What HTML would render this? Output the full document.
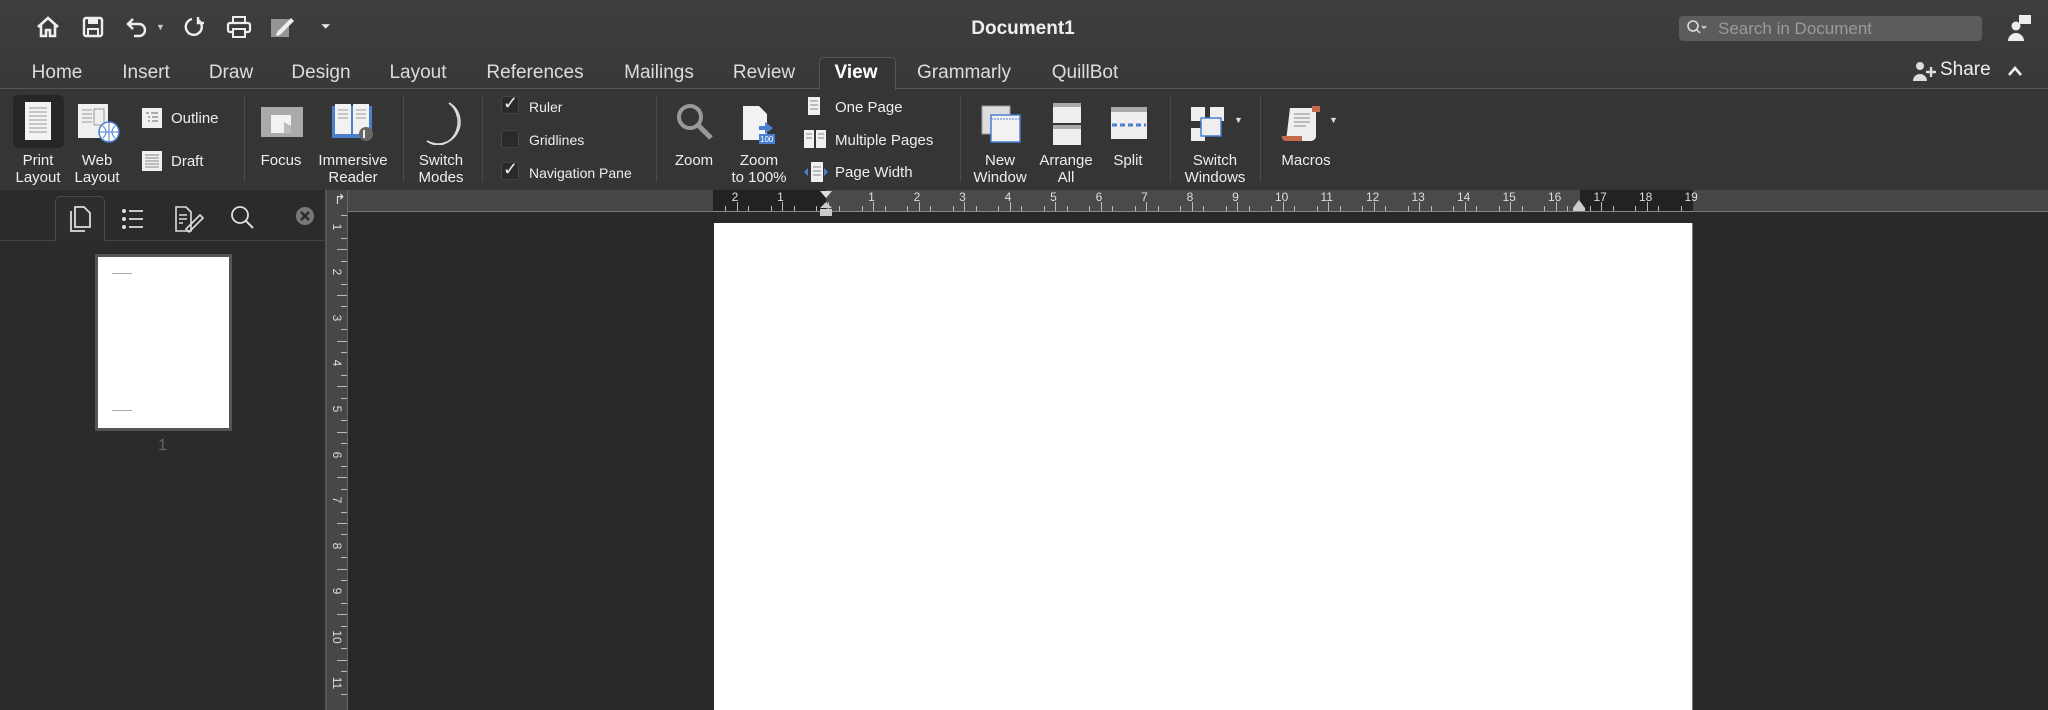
<!DOCTYPE html>
<html><head><meta charset="utf-8"><style>
*{margin:0;padding:0;box-sizing:border-box}
body{width:2048px;height:710px;overflow:hidden;background:#292929;font-family:"Liberation Sans",sans-serif;color:#e6e6e6;position:relative}
.a{position:absolute}
#top{left:0;top:0;width:2048px;height:89px;background:linear-gradient(#3e3e3e,#383838);border-bottom:1px solid #555}
#rib{left:0;top:89px;width:2048px;height:101px;background:#353535}
.tab{position:absolute;top:62px;font-size:19px;color:#ddd;transform:translateX(-50%);white-space:nowrap}
.lbl{position:absolute;font-size:15px;line-height:17px;text-align:center;transform:translateX(-50%);white-space:nowrap;color:#eee}
.sep{position:absolute;top:96px;width:1px;height:86px;background:#4a4a4a}
.sm{position:absolute;font-size:15px;color:#eee;white-space:nowrap}
.cb{position:absolute;left:501px;width:18px;height:18px;border-radius:3px;background:#2a2a2a;border:1px solid #444}
.chk{position:absolute;left:503px;font-size:18px;color:#eee}
svg{position:absolute}
</style></head><body>
<div id="top" class="a"></div>
<div id="rib" class="a"></div>

<svg style="left:36px;top:15px" width="24" height="24" viewBox="0 0 24 24"><path d="M2 12 L12 3 L22 12 M5 10 V21 H10 V15 H14 V21 H19 V10" fill="none" stroke="#eee" stroke-width="2.6"/></svg>
<svg style="left:82px;top:16px" width="22" height="22" viewBox="0 0 22 22"><rect x="2" y="2" width="18" height="18" rx="2" fill="none" stroke="#eee" stroke-width="2.4"/><rect x="6" y="2" width="10" height="6" fill="#eee"/><rect x="6" y="13" width="10" height="7" fill="none" stroke="#eee" stroke-width="2"/></svg>
<svg style="left:125px;top:16px" width="24" height="22" viewBox="0 0 24 22"><path d="M8 3 L3 8 L8 13 M3 8 H14 A6 6 0 0 1 14 20 H9" fill="none" stroke="#eee" stroke-width="2.4"/></svg>
<div class="a" style="left:156px;top:22px;font-size:9px;color:#ccc">▼</div>
<svg style="left:182px;top:15px" width="24" height="24" viewBox="0 0 24 24"><path d="M10 4 A8 8 0 1 0 16 5 M16 2 V8 H22" fill="none" stroke="#eee" stroke-width="2.4"/></svg>
<svg style="left:226px;top:15px" width="26" height="24" viewBox="0 0 26 24"><rect x="7" y="2" width="12" height="6" fill="none" stroke="#eee" stroke-width="2"/><rect x="2" y="8" width="22" height="9" rx="2" fill="none" stroke="#eee" stroke-width="2.2"/><rect x="7" y="14" width="12" height="8" fill="#3c3c3c" stroke="#eee" stroke-width="2"/></svg>
<svg style="left:269px;top:15px" width="26" height="24" viewBox="0 0 26 24"><rect x="2" y="4" width="18" height="18" fill="#bbb" opacity=".7"/><path d="M8 17 L22 3 L25 6 L11 20 L7 21Z" fill="#eee"/></svg>
<div class="a" style="left:321px;top:19px;font-size:12px;color:#eee">⏷</div>

<div class="a" style="left:1023px;top:18px;transform:translateX(-50%);font-size:19px;font-weight:bold;color:#eee">Document1</div>
<div class="a" style="left:1679px;top:16px;width:303px;height:25px;background:#5c5c5c;border-radius:4px"></div>
<svg style="left:1686px;top:19px" width="22" height="18" viewBox="0 0 22 18"><circle cx="7" cy="7" r="5" fill="none" stroke="#ddd" stroke-width="1.6"/><path d="M10.5 10.5 L14 14 M16 7 L18 9 L20 7" fill="none" stroke="#ddd" stroke-width="1.5"/></svg>
<div class="a" style="left:1718px;top:19px;font-size:17px;color:#9a9a9a">Search in Document</div>
<svg style="left:2006px;top:14px" width="26" height="28" viewBox="0 0 26 28"><rect x="13" y="1" width="12" height="9" fill="#eee"/><circle cx="10" cy="12" r="4.5" fill="#eee"/><path d="M2 27 A8 8 0 0 1 18 27Z" fill="#eee"/></svg>

<div class="a" style="left:819px;top:57px;width:77px;height:33px;background:#353535;border:1px solid #555;border-bottom:none;border-radius:5px 5px 0 0"></div>
<div class="tab" style="left:57px">Home</div>
<div class="tab" style="left:146px">Insert</div>
<div class="tab" style="left:231px">Draw</div>
<div class="tab" style="left:321px">Design</div>
<div class="tab" style="left:418px">Layout</div>
<div class="tab" style="left:535px">References</div>
<div class="tab" style="left:659px">Mailings</div>
<div class="tab" style="left:764px">Review</div>
<div class="tab" style="left:856px;font-weight:bold;color:#fff">View</div>
<div class="tab" style="left:964px">Grammarly</div>
<div class="tab" style="left:1085px">QuillBot</div>
<svg style="left:1912px;top:60px" width="26" height="22" viewBox="0 0 26 22"><circle cx="8" cy="6" r="4" fill="#ddd"/><path d="M1 21 A7 7 0 0 1 15 21Z" fill="#ddd"/><path d="M14 12 H24 M19 7 V17" stroke="#ddd" stroke-width="2.4"/></svg>
<div class="a" style="left:1940px;top:59px;font-size:19px;color:#eee">Share</div>
<svg style="left:2007px;top:65px" width="16" height="12" viewBox="0 0 16 12"><path d="M2 10 L8 3 L14 10" fill="none" stroke="#eee" stroke-width="2.6"/></svg>

<div class="a" style="left:13px;top:95px;width:51px;height:53px;background:#262626;border-radius:5px"></div>
<svg style="left:22px;top:100px" width="32" height="42" viewBox="0 0 32 42"><rect x="3" y="2" width="26" height="38" fill="#f4f4f4"/><g stroke="#999" stroke-width="1"><path d="M7 8H25M7 12H25M7 16H25M7 20H25M7 24H25M7 28H25M7 32H25"/></g></svg>
<div class="lbl" style="left:38px;top:152px">Print<br>Layout</div>
<svg style="left:76px;top:102px" width="46" height="42" viewBox="0 0 46 42"><rect x="2" y="2" width="30" height="34" fill="#f0f0f0"/><path d="M6 8H16M6 12H16M6 16H16M6 20H16" stroke="#999"/><rect x="18" y="7" width="10" height="16" fill="none" stroke="#999"/><circle cx="33" cy="30" r="10" fill="#fff" stroke="#4a7fd0" stroke-width="1.5"/><path d="M23 30H43M33 20V40M27 24Q33 30 27 36M39 24Q33 30 39 36" stroke="#4a7fd0" fill="none"/></svg>
<div class="lbl" style="left:97px;top:152px">Web<br>Layout</div>
<svg style="left:141px;top:107px" width="22" height="22" viewBox="0 0 22 22"><rect x="1" y="1" width="20" height="20" fill="#f0f0f0"/><path d="M5 6H8M10 6H17M7 10H9M11 10H17M7 14H9M11 14H17" stroke="#666"/></svg>
<div class="sm" style="left:171px;top:110px">Outline</div>
<svg style="left:141px;top:150px" width="22" height="22" viewBox="0 0 22 22"><rect x="1" y="1" width="20" height="20" fill="#f0f0f0"/><path d="M4 5H18M4 8H18M4 11H18M4 14H18M4 17H18" stroke="#888"/></svg>
<div class="sm" style="left:171px;top:153px">Draft</div>
<div class="sep" style="left:244px"></div>
<svg style="left:260px;top:106px" width="44" height="36" viewBox="0 0 44 36"><rect x="1" y="1" width="42" height="30" fill="#aaa"/><rect x="11" y="9" width="20" height="18" fill="#f2f2f2"/><path d="M24 16L31 20V27H24Z" fill="#bbb"/></svg>
<div class="lbl" style="left:281px;top:152px">Focus</div>
<svg style="left:330px;top:102px" width="46" height="42" viewBox="0 0 46 42"><path d="M2 4H22V36H2Z" fill="#4a7fd0"/><path d="M22 4H42V36H22Z" fill="#4a7fd0"/><path d="M5 2H21V32H5ZM23 2H39V32H23Z" fill="#f2f2f2"/><path d="M8 8H18M8 12H18M8 16H18M26 8H36M26 12H36M26 16H36" stroke="#999"/><circle cx="36" cy="32" r="7" fill="#666"/><path d="M34 28V36" stroke="#eee" stroke-width="2"/></svg>
<div class="lbl" style="left:353px;top:152px">Immersive<br>Reader</div>
<div class="sep" style="left:403px"></div>
<svg style="left:423px;top:101px" width="38" height="44" viewBox="0 0 38 44"><path d="M26 2 A20 20 0 1 1 4 40 A16 18 0 0 0 26 2Z" fill="none" stroke="#ddd" stroke-width="1.6"/></svg>
<div class="lbl" style="left:441px;top:152px">Switch<br>Modes</div>
<div class="sep" style="left:482px"></div>
<div class="cb" style="top:96px"></div><div class="chk" style="top:93px">✓</div>
<div class="sm" style="left:529px;top:99px;font-size:14px">Ruler</div>
<div class="cb" style="top:130px"></div>
<div class="sm" style="left:529px;top:132px;font-size:14px">Gridlines</div>
<div class="cb" style="top:162px"></div><div class="chk" style="top:159px">✓</div>
<div class="sm" style="left:529px;top:165px;font-size:14px">Navigation Pane</div>
<div class="sep" style="left:656px"></div>
<svg style="left:675px;top:102px" width="40" height="40" viewBox="0 0 40 40"><circle cx="15" cy="15" r="11" fill="none" stroke="#999" stroke-width="4"/><path d="M23 23L36 36" stroke="#999" stroke-width="5"/></svg>
<div class="lbl" style="left:694px;top:152px">Zoom</div>
<svg style="left:741px;top:104px" width="36" height="42" viewBox="0 0 36 42"><path d="M2 2H18L26 10V36H2Z" fill="#f2f2f2"/><path d="M18 22H24V18L32 24L24 30V26H18Z" fill="#4a7fd0"/><rect x="18" y="30" width="16" height="10" fill="#4a7fd0"/><text x="19" y="38" font-size="8" fill="#fff" font-family="Liberation Sans">100</text></svg>
<div class="lbl" style="left:759px;top:152px">Zoom<br>to 100%</div>
<svg style="left:807px;top:96px" width="14" height="20" viewBox="0 0 14 20"><rect x="1" y="1" width="12" height="18" fill="#f0f0f0"/><path d="M3 5H11M3 9H11M3 13H11" stroke="#888"/></svg>
<div class="sm" style="left:835px;top:99px">One Page</div>
<svg style="left:803px;top:129px" width="24" height="20" viewBox="0 0 24 20"><rect x="1" y="1" width="10" height="18" fill="#f0f0f0"/><rect x="13" y="1" width="10" height="18" fill="#f0f0f0"/><path d="M3 5H9M3 9H9M15 5H21M15 9H21" stroke="#888"/></svg>
<div class="sm" style="left:835px;top:132px">Multiple Pages</div>
<svg style="left:803px;top:161px" width="26" height="22" viewBox="0 0 26 22"><rect x="8" y="1" width="12" height="20" fill="#f0f0f0"/><path d="M10 6H18M10 10H18M10 14H18" stroke="#888"/><path d="M1 11L5 7V15Z M25 11L21 7V15Z" fill="#4a7fd0"/></svg>
<div class="sm" style="left:835px;top:164px">Page Width</div>
<div class="sep" style="left:960px"></div>
<svg style="left:980px;top:104px" width="42" height="40" viewBox="0 0 42 40"><rect x="2" y="2" width="28" height="28" fill="#ddd" stroke="#999"/><rect x="11" y="11" width="29" height="27" fill="#f2f2f2" stroke="#4a7fd0" stroke-width="1.5"/><path d="M11 15H40" stroke="#4a7fd0" stroke-dasharray="2 1"/></svg>
<div class="lbl" style="left:1000px;top:152px">New<br>Window</div>
<svg style="left:1052px;top:102px" width="30" height="44" viewBox="0 0 30 44"><rect x="1" y="1" width="28" height="20" fill="#eee"/><rect x="1" y="1" width="28" height="4" fill="#aaa"/><rect x="1" y="23" width="28" height="20" fill="#eee"/><rect x="1" y="23" width="28" height="4" fill="#aaa"/></svg>
<div class="lbl" style="left:1066px;top:152px">Arrange<br>All</div>
<svg style="left:1110px;top:106px" width="38" height="34" viewBox="0 0 38 34"><rect x="1" y="1" width="36" height="32" fill="#eee"/><rect x="1" y="1" width="36" height="5" fill="#aaa"/><path d="M2 19H36" stroke="#4a7fd0" stroke-width="3" stroke-dasharray="5 3"/></svg>
<div class="lbl" style="left:1128px;top:152px">Split</div>
<div class="sep" style="left:1170px"></div>
<svg style="left:1190px;top:106px" width="36" height="36" viewBox="0 0 36 36"><rect x="1" y="1" width="14" height="14" fill="#eee"/><rect x="20" y="1" width="14" height="14" fill="#eee"/><rect x="1" y="22" width="14" height="13" fill="#eee"/><rect x="11" y="12" width="20" height="18" fill="#eee" stroke="#4a7fd0" stroke-width="1.5"/></svg>
<div class="a" style="left:1234px;top:115px;font-size:9px;color:#ddd">▼</div>
<div class="lbl" style="left:1215px;top:152px">Switch<br>Windows</div>
<div class="sep" style="left:1260px"></div>
<svg style="left:1280px;top:104px" width="42" height="40" viewBox="0 0 42 40"><path d="M10 4H36V32A5 5 0 0 1 31 37H6Z" fill="#eee"/><path d="M14 10H30M14 14H30M14 18H30M14 22H26" stroke="#888"/><path d="M2 32H22V37H6A4 4 0 0 1 2 32Z" fill="#c56a4d"/><path d="M32 2H40V8H32Z" fill="#c56a4d"/></svg>
<div class="a" style="left:1329px;top:115px;font-size:9px;color:#ddd">▼</div>
<div class="lbl" style="left:1306px;top:152px">Macros</div>

<div class="a" style="left:0;top:190px;width:326px;height:520px;background:#2b2b2b"></div>
<div class="a" style="left:0;top:240px;width:326px;height:1px;background:#444"></div>
<div class="a" style="left:55px;top:196px;width:50px;height:45px;background:#2e2e2e;border:1px solid #4a4a4a;border-bottom:none;border-radius:5px 5px 0 0"></div>
<svg style="left:68px;top:205px" width="24" height="28" viewBox="0 0 24 28"><path d="M7 2H16L22 8V22H7Z M3 6V26H17" fill="none" stroke="#ddd" stroke-width="1.8"/></svg>
<svg style="left:121px;top:207px" width="24" height="24" viewBox="0 0 24 24"><circle cx="3" cy="4" r="2" fill="#ddd"/><circle cx="3" cy="12" r="2" fill="#ddd"/><circle cx="3" cy="20" r="2" fill="#ddd"/><path d="M8 4H22M8 12H22M8 20H22" stroke="#ddd" stroke-width="1.8"/></svg>
<svg style="left:174px;top:205px" width="30" height="28" viewBox="0 0 30 28"><path d="M2 2H12L17 7V26H2Z M5 10H13M5 14H13M5 18H9" fill="none" stroke="#ddd" stroke-width="1.6"/><path d="M12 24L26 10L29 13L15 27Z" fill="none" stroke="#ddd" stroke-width="1.6"/></svg>
<svg style="left:230px;top:205px" width="26" height="26" viewBox="0 0 26 26"><circle cx="10" cy="10" r="8" fill="none" stroke="#ddd" stroke-width="1.8"/><path d="M16 16L23 23" stroke="#ddd" stroke-width="2"/></svg>
<svg style="left:295px;top:206px" width="20" height="20" viewBox="0 0 20 20"><circle cx="10" cy="10" r="9" fill="#777"/><path d="M6 6L14 14M14 6L6 14" stroke="#2b2b2b" stroke-width="2.4"/></svg>
<div class="a" style="left:95px;top:254px;width:137px;height:177px;background:#555"></div>
<div class="a" style="left:98px;top:257px;width:131px;height:171px;background:#fff"></div>
<div class="a" style="left:112px;top:273px;width:20px;height:1px;background:#aaa"></div>
<div class="a" style="left:112px;top:410px;width:20px;height:1px;background:#aaa"></div>
<div class="a" style="left:158px;top:437px;font-size:16px;color:#666">1</div>

<div class="a" style="left:325px;top:190px;width:2px;height:520px;background:#555"></div>
<div class="a" style="left:327px;top:190px;width:21px;height:520px;background:#474747;border-right:1px solid #666"></div>
<div class="a" style="left:334px;top:191px;font-size:14px;color:#ddd">↱</div>
<div id="vt"></div>
<div id="vr"></div>

<div class="a" style="left:348px;top:190px;width:1700px;height:22px;background:#474747"></div>
<div class="a" style="left:713px;top:190px;width:980px;height:22px;background:#222"></div>
<div class="a" style="left:826px;top:190px;width:754px;height:22px;background:#4a4a4a"></div>
<div class="a" style="left:713px;top:211px;width:980px;height:1px;background:#888"></div>
<div class="a" style="left:348px;top:211px;width:365px;height:1px;background:#777"></div>
<div class="a" style="left:1693px;top:211px;width:355px;height:1px;background:#777"></div>
<div id="hr"></div>
<svg style="left:818px;top:190px" width="16" height="30" viewBox="0 0 16 30"><path d="M2 1H14L8 8Z" fill="#ddd"/><path d="M8 12L14 18H2Z" fill="#ccc"/><rect x="2" y="19" width="12" height="7" fill="#ccc"/></svg>
<svg style="left:1571px;top:198px" width="16" height="14" viewBox="0 0 16 14"><path d="M8 2L14 10V13H2V10Z" fill="#ccc"/></svg>

<div class="a" style="left:714px;top:223px;width:978px;height:487px;background:#fff"></div>
<div class="a" style="left:1692px;top:223px;width:1px;height:487px;background:#777"></div>

<script>
var h='';
for(var i=-2;i<=19;i++){if(i==0)continue;var x=826+i*45.5;if(x>1700)break;
 h+='<div class="a" style="left:'+(x-6)+'px;top:190px;width:12px;text-align:center;font-size:12px;color:#ddd">'+Math.abs(i)+'</div>';}
for(var j=0;j<90;j++){var xx=714+j*11.375;if(xx>1692)break;var q=j%4;
 if(q==0)continue;
 h+='<div class="a" style="left:'+xx+'px;top:'+(q==2?202:206)+'px;width:1px;height:'+(q==2?9:5)+'px;background:#bbb"></div>';}
document.getElementById('hr').innerHTML=h;
var v='';
for(var k=1;k<=11;k++){var y=181+k*45.6;
 v+='<div class="a" style="left:329px;top:'+(y-8)+'px;width:16px;height:16px;font-size:12px;color:#ddd;transform:rotate(90deg);text-align:center;line-height:16px">'+k+'</div>';}
var t='';
for(var m=0;m<46;m++){var yy=181+m*11.4;if(yy<213)continue;var r=m%4;if(r==0)continue;
 t+='<div class="a" style="left:'+(r==2?337:341)+'px;top:'+yy+'px;width:'+(r==2?10:6)+'px;height:1px;background:#bbb"></div>';}
document.getElementById('vr').innerHTML=v;
document.getElementById('vt').innerHTML=t;
</script>
</body></html>
